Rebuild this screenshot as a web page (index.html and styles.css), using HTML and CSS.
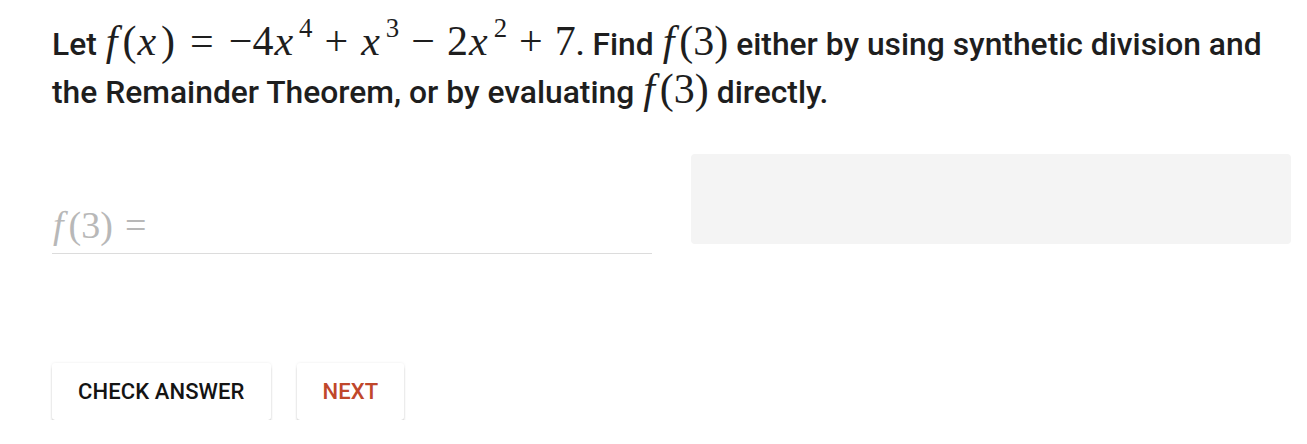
FILE: index.html
```html
<!DOCTYPE html>
<html>
<head>
<meta charset="utf-8">
<link rel="stylesheet" href="styles.css">
</head>
<body>
<main class="page">
  <p class="question">Let <span class="m"><i>f</i>(<i>x</i>)<span class="rel">=</span>−4<i>x</i><sup>4</sup><span class="op">+</span><i>x</i><sup>3</sup><span class="op">−</span>2<i>x</i><sup>2</sup><span class="op">+</span>7</span>. Find <span class="m"><i>f</i>(3)</span> either by using synthetic division and the Remainder Theorem, or by evaluating <span class="m"><i>f</i>(3)</span> directly.</p>
  <div class="answer-row">
    <div class="field">
      <span class="field-label"><i>f</i>(3)<span class="rel">=</span></span>
    </div>
    <div class="feedback"></div>
  </div>
  <div class="actions">
    <button class="btn">CHECK ANSWER</button>
    <button class="btn btn-next">NEXT</button>
  </div>
</main>
</body>
</html>
```
FILE: styles.css
```css
html, body {
  margin: 0;
  padding: 0;
  background: #ffffff;
}
.page {
  padding: 20px 0 0 52px;
  width: 1240px;
  font-family: Roboto, "Liberation Sans", sans-serif;
}
.question {
  margin: 0;
  font-size: 31.8px;
  font-weight: 500;
  line-height: 48px;
  color: #1e1e1e;
}
.m {
  font-family: "Liberation Serif", "Times New Roman", serif;
  font-weight: 400;
  font-size: 42px;
  line-height: 0;
}
.m i, .field-label i {
  font-style: italic;
  padding: 0 5px 0 1px;
}
.m sup {
  font-size: 0.64em;
  line-height: 0;
  vertical-align: 0.66em;
  margin-left: 1px;
}
.op {
  padding: 0 12px;
}
.rel {
  padding: 0 15px;
}
.answer-row {
  display: flex;
  gap: 39px;
  margin-top: 38px;
}
.field {
  width: 600px;
  height: 100px;
  box-sizing: border-box;
  border-bottom: 1px solid #dcdcdc;
  display: flex;
  align-items: flex-end;
  padding-bottom: 7px;
}
.field-label {
  font-family: "Liberation Serif", "Times New Roman", serif;
  font-size: 38px;
  color: #b8b8b8;
  line-height: 42px;
}
.field-label .rel {
  padding: 0 12px;
}
.feedback {
  width: 600px;
  height: 90px;
  background: #f4f4f4;
  border-radius: 4px;
}
.actions {
  display: flex;
  gap: 26px;
  margin-top: 109px;
}
.btn {
  height: 57px;
  padding: 0 26px;
  border: none;
  border-radius: 3px;
  background: #ffffff;
  box-shadow: 0 3px 3px -1px rgba(0,0,0,0.35), 0 0 3px rgba(0,0,0,0.08);
  font-family: Roboto, "Liberation Sans", sans-serif;
  font-size: 22px;
  font-weight: 500;
  color: #141414;
  letter-spacing: 0.1px;
}
.btn-next {
  color: #c0472b;
}
```
